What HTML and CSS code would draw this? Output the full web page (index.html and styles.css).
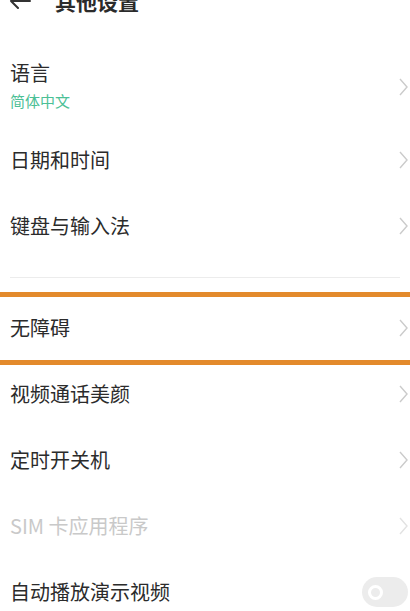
FILE: index.html
```html
<!DOCTYPE html>
<html lang="zh-CN">
<head>
<meta charset="utf-8">
<title>其他设置</title>
<link rel="stylesheet" href="styles.css">
</head>
<body>
<div class="page">
  <header class="header">
    <svg class="back" width="22" height="16" viewBox="0 0 22 16"><path d="M21 8H2M9 1L2 8l7 7" fill="none" stroke="#333" stroke-width="2" stroke-linecap="round" stroke-linejoin="round"/></svg>
    <h1 class="title">其他设置</h1>
  </header>
  <div class="list">
    <div class="row row-tall">
      <div class="texts">
        <div class="label">语言</div>
        <div class="sub">简体中文</div>
      </div>
      <svg class="chev" width="9" height="18" viewBox="0 0 9 18"><polyline points="1,1 8,9 1,17" fill="none" stroke="#cbcbcb" stroke-width="1.4"/></svg>
    </div>
    <div class="row">
      <div class="label">日期和时间</div>
      <svg class="chev" width="9" height="18" viewBox="0 0 9 18"><polyline points="1,1 8,9 1,17" fill="none" stroke="#cbcbcb" stroke-width="1.4"/></svg>
    </div>
    <div class="row">
      <div class="label">键盘与输入法</div>
      <svg class="chev" width="9" height="18" viewBox="0 0 9 18"><polyline points="1,1 8,9 1,17" fill="none" stroke="#cbcbcb" stroke-width="1.4"/></svg>
    </div>
    <div class="sep"><div class="sep-line"></div></div>
    <div class="row highlighted">
      <div class="label">无障碍</div>
      <svg class="chev" width="9" height="18" viewBox="0 0 9 18"><polyline points="1,1 8,9 1,17" fill="none" stroke="#cbcbcb" stroke-width="1.4"/></svg>
      <div class="mark"></div>
    </div>
    <div class="row">
      <div class="label">视频通话美颜</div>
      <svg class="chev" width="9" height="18" viewBox="0 0 9 18"><polyline points="1,1 8,9 1,17" fill="none" stroke="#cbcbcb" stroke-width="1.4"/></svg>
    </div>
    <div class="row">
      <div class="label">定时开关机</div>
      <svg class="chev" width="9" height="18" viewBox="0 0 9 18"><polyline points="1,1 8,9 1,17" fill="none" stroke="#cbcbcb" stroke-width="1.4"/></svg>
    </div>
    <div class="row">
      <div class="label disabled">SIM 卡应用程序</div>
      <svg class="chev" width="9" height="18" viewBox="0 0 9 18"><polyline points="1,1 8,9 1,17" fill="none" stroke="#e2e2e2" stroke-width="1.4"/></svg>
    </div>
    <div class="row">
      <div class="label">自动播放演示视频</div>
      <div class="toggle"><div class="knob"></div></div>
    </div>
  </div>
</div>
</body>
</html>
```

FILE: styles.css
```css
html, body {
  margin: 0;
  padding: 0;
  background: #ffffff;
  overflow: hidden;
}
body {
  font-family: "Noto Sans CJK SC", "Noto Sans", sans-serif;
  color: #2b2b2b;
}
.page {
  width: 410px;
  margin-top: -27px;
}
.header {
  height: 56px;
  display: flex;
  align-items: center;
  padding-left: 9px;
}
.back {
  display: block;
}
.title {
  margin: 0 0 0 24px;
  font-size: 21px;
  font-weight: 700;
  line-height: 28px;
  color: #2b2b2b;
}
.list {
  padding-top: 17px;
}
.row {
  position: relative;
  height: 66px;
  display: flex;
  align-items: center;
  justify-content: space-between;
  padding: 0 2px 0 10px;
}
.row-tall {
  height: 81px;
}
.texts {
  display: flex;
  flex-direction: column;
}
.label {
  font-size: 20px;
  line-height: 26px;
  color: #2b2b2b;
}
.label.disabled {
  color: #c9c9c9;
}
.sub {
  margin-top: 2px;
  font-size: 15px;
  line-height: 26px;
  color: #4cc096;
}
.chev {
  display: block;
  flex: none;
}
.sep {
  height: 36px;
  display: flex;
  align-items: center;
  padding: 0 10px;
}
.sep-line {
  flex: 1;
  height: 1px;
  background: #ececec;
}
.mark {
  position: absolute;
  left: 0;
  right: 0;
  top: -3px;
  bottom: -4px;
  border-top: 5px solid #e38a2c;
  border-bottom: 5px solid #e38a2c;
  pointer-events: none;
}
.toggle {
  width: 46px;
  height: 30px;
  border-radius: 15px;
  background: #ececec;
  display: flex;
  align-items: center;
  padding-left: 6px;
  box-sizing: border-box;
  margin-right: 0;
}
.knob {
  width: 15px;
  height: 15px;
  border-radius: 50%;
  border: 3.5px solid #ffffff;
  box-sizing: border-box;
}
```
